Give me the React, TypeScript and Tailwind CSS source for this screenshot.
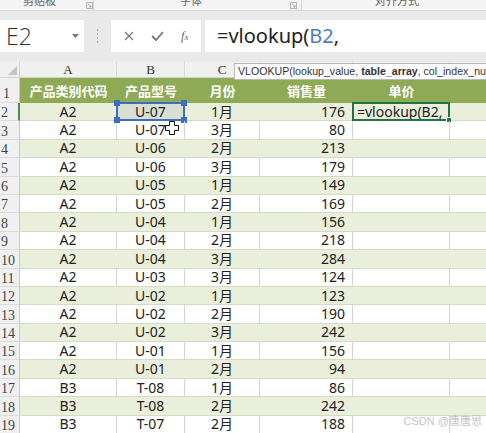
import React from "react";

const rows: [string, string, string, string][] = [
  ["A2", "U-07", "1月", "176"],
  ["A2", "U-07", "3月", "80"],
  ["A2", "U-06", "2月", "213"],
  ["A2", "U-06", "3月", "179"],
  ["A2", "U-05", "1月", "149"],
  ["A2", "U-05", "2月", "169"],
  ["A2", "U-04", "1月", "156"],
  ["A2", "U-04", "2月", "218"],
  ["A2", "U-04", "3月", "284"],
  ["A2", "U-03", "3月", "124"],
  ["A2", "U-02", "1月", "123"],
  ["A2", "U-02", "2月", "190"],
  ["A2", "U-02", "3月", "242"],
  ["A2", "U-01", "1月", "156"],
  ["A2", "U-01", "2月", "94"],
  ["B3", "T-08", "1月", "86"],
  ["B3", "T-08", "2月", "242"],
  ["B3", "T-07", "2月", "188"],
];

function Launcher() {
  return (
    <svg width="7" height="7" viewBox="0 0 7 7" className="mt-[2px]">
      <path d="M0.5 0.5h6v6h-6z" fill="none" stroke="#a5a5a5" strokeWidth="0.8" />
      <path d="M2 2l3 3M5 3v2h-2" fill="none" stroke="#a5a5a5" strokeWidth="0.8" />
    </svg>
  );
}

export default function App() {
  return (
    <div className="relative w-[486px] h-[433px] overflow-hidden bg-[#e9e9e9] font-['Noto_Sans','Noto_Sans_CJK_SC',sans-serif]">
      {/* ribbon group labels */}
      <div className="h-[11px] bg-[#f4f4f4] border-b border-[#d9d9d9] flex overflow-hidden text-[11px] text-[#666] font-['Noto_Sans_CJK_SC',sans-serif]">
        <div className="w-[94px] flex items-start border-r border-[#d4d4d4]">
          <span className="ml-[23px] -mt-[7px] leading-[14px]">剪贴板</span>
          <div className="ml-[30px]"><Launcher /></div>
        </div>
        <div className="w-[208px] flex items-start border-r border-[#d4d4d4]">
          <span className="ml-[86px] -mt-[7px] leading-[14px]">字体</span>
          <div className="ml-[88px]"><Launcher /></div>
        </div>
        <div className="flex-1 flex items-start">
          <span className="ml-[73px] -mt-[7px] leading-[14px]">对齐方式</span>
        </div>
      </div>

      {/* formula bar */}
      <div className="flex h-[32px] mt-[9px]">
        <div className="w-[84px] bg-white flex items-center justify-between pl-[6px] pr-[5px]">
          <span className="text-[23px] text-[#333] leading-none font-['Open_Sans',sans-serif] font-light">E2</span>
          <svg width="7" height="4" viewBox="0 0 7 4"><path d="M0 0h7L3.5 4z" fill="#777" /></svg>
        </div>
        <div className="w-[27px] flex flex-col items-center justify-center gap-[2px]">
          <div className="w-[1px] h-[2px] bg-[#aaa]" />
          <div className="w-[1px] h-[2px] bg-[#aaa]" />
          <div className="w-[1px] h-[2px] bg-[#aaa]" />
          <div className="w-[1px] h-[2px] bg-[#aaa]" />
        </div>
        <div className="w-[90px] bg-white flex items-center justify-around px-[4px]">
          <svg width="10" height="10" viewBox="0 0 10 10"><path d="M1 1l8 8M9 1l-8 8" stroke="#777" strokeWidth="1.3" /></svg>
          <svg width="13" height="10" viewBox="0 0 13 10"><path d="M1 5l4 4 7-8" stroke="#777" strokeWidth="1.8" fill="none" /></svg>
          <span className="text-[12px] italic text-[#666] font-['Liberation_Serif',serif]">f<span className="text-[9px]">x</span></span>
        </div>
        <div className="flex-1 ml-[4px] bg-white flex items-center pl-[12px]">
          <span className="text-[20px] text-[#222] leading-none">
            =vlookup(<span className="text-[#4a7ebb]">B2</span>,
          </span>
        </div>
      </div>

      {/* sheet */}
      <div className="mt-[10px] relative">
        {/* column header */}
        <div className="flex h-[16px] bg-[#f0f0f0] border-b border-[#d0d0d0] text-[13px] text-[#333] font-['Liberation_Serif',serif] leading-[16px]">
          <div className="w-[20px] relative border-r border-[#d0d0d0]">
            <svg className="absolute right-[2px] bottom-[2px]" width="9" height="9" viewBox="0 0 9 9"><path d="M9 0v9H0z" fill="#c4c4c4" /></svg>
          </div>
          <div className="w-[97px] text-center border-r border-[#d8d8d8]">A</div>
          <div className="w-[68px] text-center border-r border-[#d8d8d8]">B</div>
          <div className="w-[75px] text-center border-r border-[#d8d8d8]">C</div>
          <div className="w-[93px] border-r border-[#d8d8d8]" />
          <div className="w-[97px] border-r border-[#d8d8d8]" />
          <div className="flex-1" />
        </div>

        {/* header row 1 */}
        <div className="flex h-[25px]">
          <div className="w-[20px] bg-[#f0f0f0] border-r border-[#c8c8c8] border-b border-b-[#dadada] text-[14px] text-[#444] font-['Liberation_Serif',serif] flex items-end pl-[3px] leading-[16px]">1</div>
          <div className="flex-1 flex bg-[#8eaa54] text-white text-[13px] font-semibold font-['Noto_Sans_CJK_SC',sans-serif] items-center">
            <div className="w-[97px] text-center">产品类别代码</div>
            <div className="w-[68px] text-center">产品型号</div>
            <div className="w-[75px] text-center">月份</div>
            <div className="w-[93px] text-center">销售量</div>
            <div className="w-[97px] text-center">单价</div>
            <div className="flex-1" />
          </div>
        </div>

        {rows.map((r, i) => {
          const n = i + 2;
          const green = n % 2 === 0;
          const bg = green ? "bg-[#eaefdc]" : "bg-white";
          const vline = green ? "border-r-[#eaefdc]" : "border-r-[#d4d4d4]";
          return (
            <div key={n} className="flex h-[18.4px] text-[14px] text-[#222] leading-none">
              <div
                className={
                  "w-[20px] bg-[#f0f0f0] border-b border-[#dadada] text-[14px] text-[#444] font-['Liberation_Serif',serif] flex items-end pl-[1px] leading-[15px] " +
                  (n === 2 ? "border-r-2 border-r-[#4a8a5c]" : "border-r border-r-[#c8c8c8]")
                }
              >
                {n}
              </div>
              <div className={"flex-1 flex border-b border-[#d3dbc3] " + bg}>
                <div className={"w-[97px] flex items-center justify-center border-r " + vline}>{r[0]}</div>
                <div
                  className={
                    "w-[68px] relative flex items-center justify-center border-r " +
                    vline +
                    (n === 2 ? " bg-[#d8dfd2]" : "")
                  }
                >
                  {r[1]}
                  {n === 2 && (
                    <div className="absolute -left-[1px] -right-[1px] -top-[1px] -bottom-[1px] border-2 border-[#3c6dbf]">
                      <div className="absolute -left-[4px] -top-[4px] w-[6px] h-[6px] bg-[#3c6dbf]" />
                      <div className="absolute -right-[4px] -top-[4px] w-[6px] h-[6px] bg-[#3c6dbf]" />
                      <div className="absolute -left-[4px] -bottom-[4px] w-[6px] h-[6px] bg-[#3c6dbf]" />
                      <div className="absolute -right-[4px] -bottom-[4px] w-[6px] h-[6px] bg-[#3c6dbf]" />
                    </div>
                  )}
                </div>
                <div className={"w-[75px] flex items-center justify-center border-r " + vline}>{r[2]}</div>
                <div className={"w-[93px] flex items-center justify-end pr-[7px] border-r " + vline}>{r[3]}</div>
                <div className={"w-[97px] relative flex items-center border-r " + vline}>
                  {n === 2 && (
                    <>
                      <span className="pl-[4px] text-[14px] text-[#222] whitespace-nowrap">=vlookup(B2,</span>
                      <div className="absolute -left-[1px] -right-[1px] -top-[1px] -bottom-[1px] border-2 border-[#217346]">
                        <div className="absolute -right-[4px] -bottom-[4px] w-[6px] h-[6px] bg-[#217346] border border-white" />
                      </div>
                    </>
                  )}
                </div>
                <div className="flex-1" />
              </div>
            </div>
          );
        })}

        {/* tooltip */}
        <div className="absolute left-[234px] top-[1px] h-[17px] w-[270px] bg-white border border-[#b8b8b8] flex items-center pl-[3px] text-[10.6px] text-[#333] whitespace-nowrap font-['Liberation_Sans',sans-serif]">
          VLOOKUP(lookup_value,<span className="font-bold ml-[3px]">table_array</span>, col_index_num
        </div>
      </div>

      {/* cursor */}
      <svg className="absolute left-[165px] top-[121px]" width="14" height="14" viewBox="0 0 14 14">
        <path d="M4.5 0.5h5v4h4v5h-4v4h-5v-4h-4v-5h4z" fill="white" stroke="#111" strokeWidth="1" />
      </svg>

      {/* watermark */}
      <div className="absolute right-[4px] bottom-[4px] text-[11px] text-[#c4c4c4] font-['Liberation_Sans','Noto_Sans_CJK_SC',sans-serif]">
        CSDN @唐唐思
      </div>
    </div>
  );
}
